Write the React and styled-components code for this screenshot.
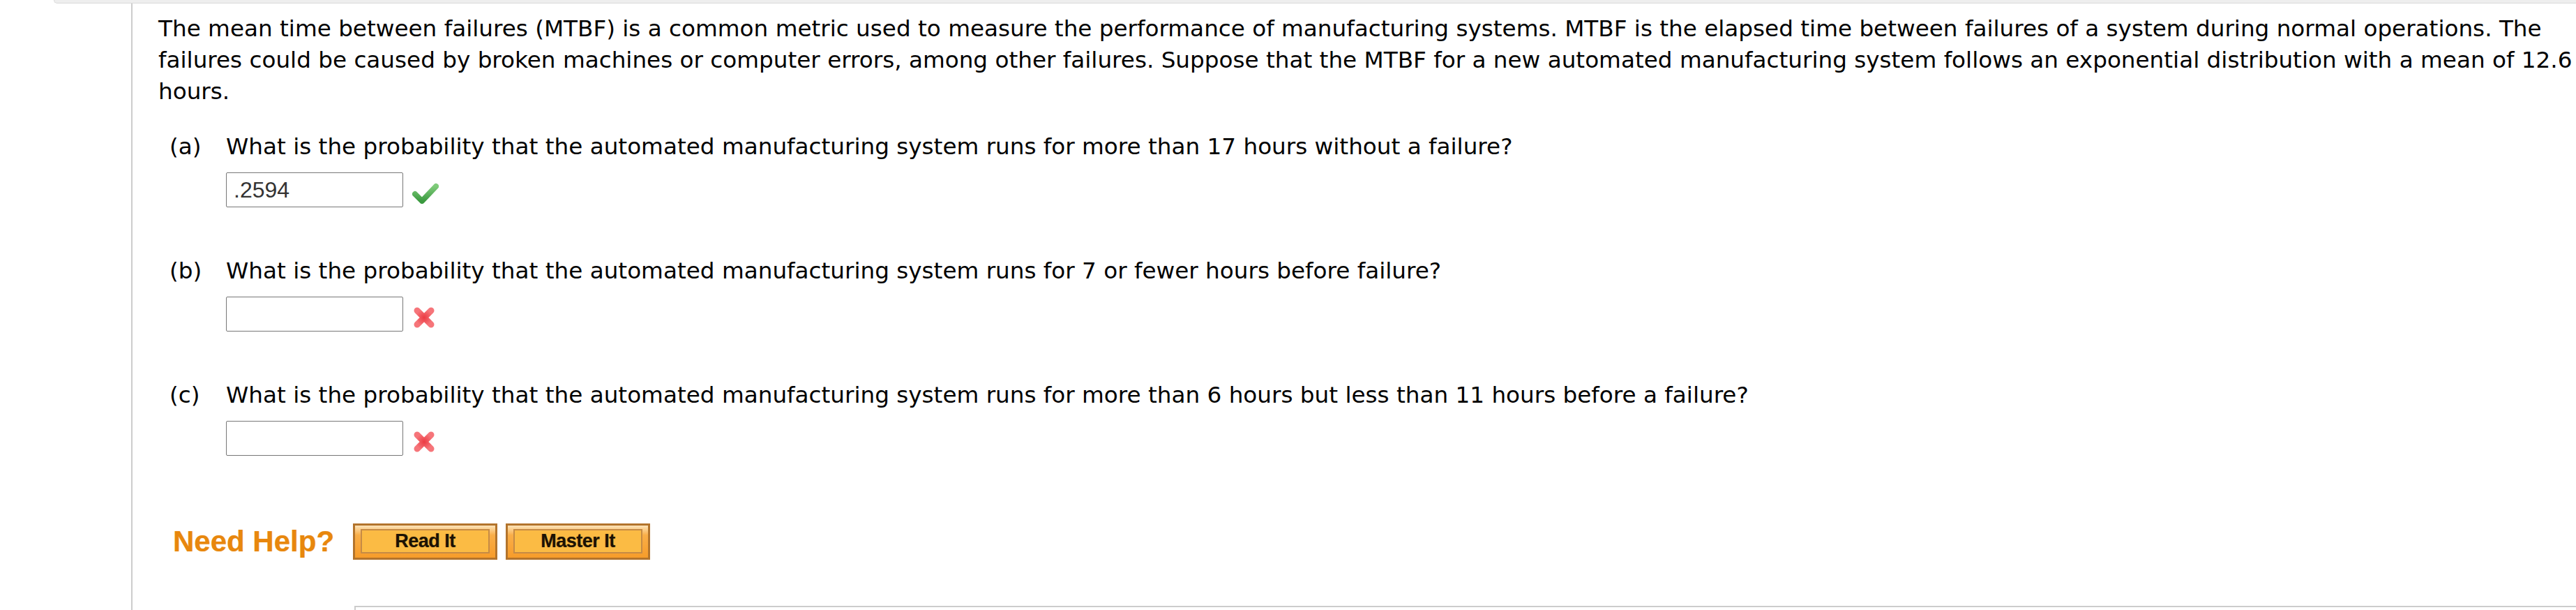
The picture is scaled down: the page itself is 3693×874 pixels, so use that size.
import React from 'react';
import styled, { createGlobalStyle } from 'styled-components';

const GlobalStyle = createGlobalStyle`
  html, body {
    margin: 0;
    padding: 0;
    background: #ffffff;
  }
  body {
    font-family: "DejaVu Sans", Verdana, sans-serif;
    color: #000000;
  }
`;

const TopStrip = styled.div`
  margin-left: 77px;
  height: 4px;
  background: #eeeeee;
  border-left: 1px solid #d9d9d9;
  border-bottom: 1px solid #d9d9d9;
  border-bottom-left-radius: 6px;
`;

const Layout = styled.div`
  display: flex;
  min-height: 869px;
`;

const Gutter = styled.div`
  width: 188px;
  flex-shrink: 0;
`;

const Content = styled.div`
  flex: 1;
  border-left: 2px solid #cdcdcd;
  padding: 14px 0 0 37px;
  overflow: hidden;
`;

const Intro = styled.p`
  margin: 0;
  font-size: 32.65px;
  line-height: 45px;
`;

const Part = styled.div`
  display: grid;
  grid-template-columns: 81px 1fr;
  padding-left: 16px;
  margin-top: ${(p) => p.$gap}px;
  font-size: 32.65px;
  line-height: 45px;
`;

const Label = styled.span``;

const Question = styled.div``;

const AnswerRow = styled.div`
  display: flex;
  align-items: center;
  gap: 13px;
  margin-top: 14px;
`;

const Input = styled.input`
  box-sizing: border-box;
  width: 254px;
  height: 50px;
  border: 1px solid #777777;
  border-radius: 2px;
  padding: 0 10px;
  font-family: "Liberation Sans", Arial, sans-serif;
  font-size: 32px;
  color: #333333;
  background: #ffffff;
  outline: none;
`;

const Mark = styled.svg`
  display: block;
  margin-top: ${(p) => p.$offset || 0}px;
`;

const HelpRow = styled.div`
  display: flex;
  align-items: center;
  margin-top: 97px;
  padding-left: 21px;
  height: 52px;
`;

const HelpTitle = styled.span`
  font-family: "Liberation Sans", Arial, sans-serif;
  font-weight: bold;
  font-size: 42px;
  color: #e8870d;
  margin-right: 27px;
  text-shadow: 0 0 1px rgba(232, 135, 13, 0.6);
`;

const HelpButton = styled.button`
  box-sizing: border-box;
  width: 207px;
  height: 52px;
  margin-right: 12px;
  padding: 5px 8px 6px;
  border: 3px solid #b3742c;
  background: linear-gradient(#fde3b8 0%, #f9ae48 30%, #f79c2a 100%);
  cursor: pointer;
  display: flex;
`;

const ButtonFace = styled.span`
  flex: 1;
  display: flex;
  align-items: center;
  justify-content: center;
  border: 2px solid #c68b45;
  background: #fbbb44;
  font-family: "Liberation Sans", Arial, sans-serif;
  font-weight: bold;
  font-size: 27px;
  letter-spacing: -0.5px;
  color: #1c1204;
  text-shadow: 0 0 1px rgba(28, 18, 4, 0.5);
`;

const NextBox = styled.div`
  margin-top: 66px;
  margin-left: 281px;
  height: 40px;
  border-top: 2px solid #cccccc;
  border-left: 2px solid #cccccc;
`;

const CheckIcon = () => (
  <Mark width="38" height="30" viewBox="0 0 38 30" $offset={10}>
    <defs>
      <linearGradient id="okGrad" x1="0" y1="0" x2="0" y2="1">
        <stop offset="0" stopColor="#7fcb7a" />
        <stop offset="1" stopColor="#3b9a40" />
      </linearGradient>
    </defs>
    <path
      d="M4 16 L14 26 L34 5"
      fill="none"
      stroke="url(#okGrad)"
      strokeWidth="8"
      strokeLinejoin="round"
      strokeLinecap="round"
    />
  </Mark>
);

const CrossIcon = () => (
  <Mark width="34" height="34" viewBox="0 0 34 34" $offset={10}>
    <defs>
      <radialGradient id="badGrad" cx="0.5" cy="0.5" r="0.6">
        <stop offset="0" stopColor="#ec3a42" />
        <stop offset="1" stopColor="#f6757a" />
      </radialGradient>
    </defs>
    <path
      d="M7 7 L27 27 M27 7 L7 27"
      fill="none"
      stroke="url(#badGrad)"
      strokeWidth="9"
      strokeLinecap="round"
    />
  </Mark>
);

const parts = [
  {
    label: '(a)',
    text: 'What is the probability that the automated manufacturing system runs for more than 17 hours without a failure?',
    value: '.2594',
    correct: true,
    gap: 34,
  },
  {
    label: '(b)',
    text: 'What is the probability that the automated manufacturing system runs for 7 or fewer hours before failure?',
    value: '',
    correct: false,
    gap: 69,
  },
  {
    label: '(c)',
    text: 'What is the probability that the automated manufacturing system runs for more than 6 hours but less than 11 hours before a failure?',
    value: '',
    correct: false,
    gap: 69,
  },
];

const App = () => {
  return (
    <>
      <GlobalStyle />
      <TopStrip />
      <Layout>
        <Gutter />
        <Content>
          <Intro>
            The mean time between failures (MTBF) is a common metric used to measure the performance of
            manufacturing systems. MTBF is the elapsed time between failures of a system during normal
            operations. The failures could be caused by broken machines or computer errors, among other
            failures. Suppose that the MTBF for a new automated manufacturing system follows an exponential
            distribution with a mean of 12.6 hours.
          </Intro>

          {parts.map((part) => (
            <Part key={part.label} $gap={part.gap}>
              <Label>{part.label}</Label>
              <Question>
                {part.text}
                <AnswerRow>
                  <Input type="text" defaultValue={part.value} />
                  {part.correct ? <CheckIcon /> : <CrossIcon />}
                </AnswerRow>
              </Question>
            </Part>
          ))}

          <HelpRow>
            <HelpTitle>Need Help?</HelpTitle>
            <HelpButton>
              <ButtonFace>Read It</ButtonFace>
            </HelpButton>
            <HelpButton>
              <ButtonFace>Master It</ButtonFace>
            </HelpButton>
          </HelpRow>

          <NextBox />
        </Content>
      </Layout>
    </>
  );
};

export default App;
